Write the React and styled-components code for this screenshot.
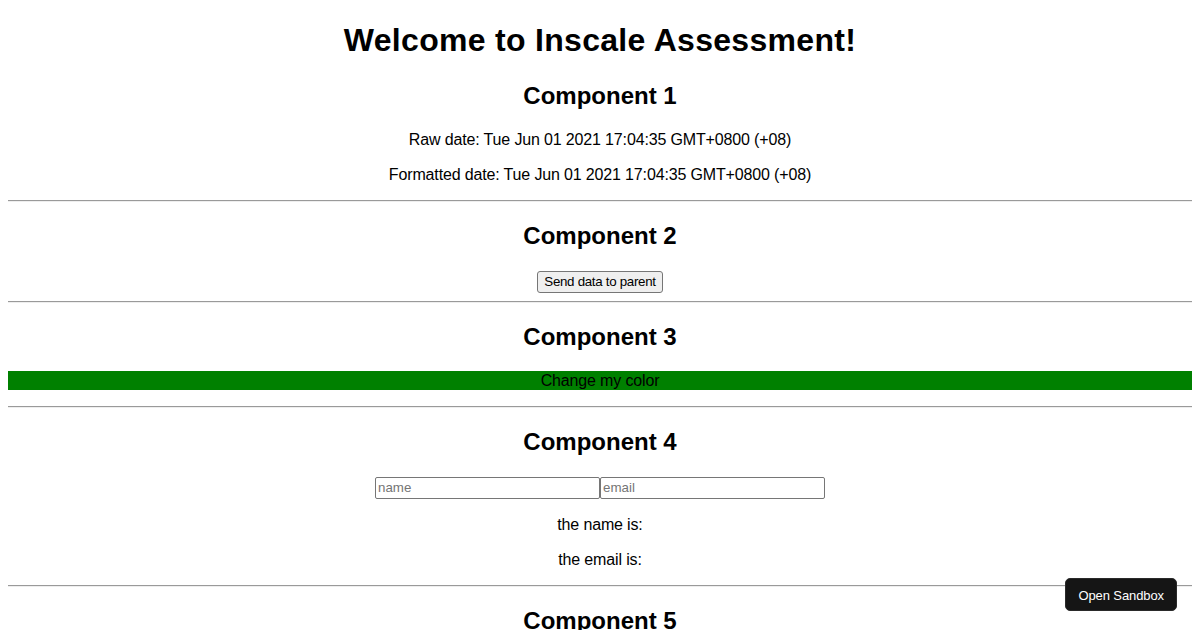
import React from "react";
import styled, { createGlobalStyle } from "styled-components";

const Global = createGlobalStyle`
  body {
    margin: 8px;
    font-family: "Liberation Sans", Arial, sans-serif;
    color: #000;
    background: #fff;
  }
`;

const Page = styled.div`
  text-align: center;
`;

const Title = styled.h1`
  font-size: 32px;
  line-height: 30px;
  font-weight: bold;
  letter-spacing: 0.3px;
  margin: 17px 0 27px;
`;

const Heading = styled.h2`
  font-size: 24px;
  font-weight: bold;
  margin: 19.92px 0;
`;

const Text = styled.p`
  font-size: 16px;
  line-height: 19px;
  letter-spacing: -0.15px;
  margin: 16px 0;
`;

const ColorBar = styled(Text)`
  background: ${(p) => p.$color};
`;

const Divider = styled.hr`
  margin: 8px 0;
  border: none;
  border-top: 1px solid #9a9a9a;
  border-bottom: 1px solid #eeeeee;
  height: 0;
`;

const ButtonRow = styled.div`
  padding-top: 1px;
  height: 22.6px;
`;

const Button = styled.button`
  font-family: "Liberation Sans", Arial, sans-serif;
  font-size: 13.33px;
  letter-spacing: -0.3px;
  padding: 1px 6px;
  background: #efefef;
  border: 1px solid #767676;
  border-radius: 3px;
  color: #000;
  height: 22px;
  vertical-align: top;
`;

const Input = styled.input`
  font-family: "Liberation Sans", Arial, sans-serif;
  font-size: 13.33px;
  width: 225px;
  height: 22px;
  box-sizing: border-box;
  padding: 1px 2px;
  border: 1px solid #767676;
  border-radius: 2px;
  vertical-align: top;
  &::placeholder {
    color: #757575;
  }
`;

const InputRow = styled.div`
  padding-top: 1px;
  font-size: 0;
`;

const SandboxButton = styled.a`
  position: fixed;
  right: 23px;
  bottom: 19px;
  background: #151515;
  color: #fff;
  font-family: "Liberation Sans", Arial, sans-serif;
  font-size: 13px;
  letter-spacing: -0.1px;
  padding: 0 12px;
  height: 33px;
  line-height: 33px;
  border-radius: 5px;
  text-decoration: none;
  border: 1px solid #2a2a2a;
  box-sizing: border-box;
`;

const date = "Tue Jun 01 2021 17:04:35 GMT+0800 (+08)";

export default function App() {
  return (
    <Page>
      <Global />
      <Title>Welcome to Inscale Assessment!</Title>

      <Heading>Component 1</Heading>
      <Text>Raw date: {date}</Text>
      <Text>Formatted date: {date}</Text>
      <Divider />

      <Heading>Component 2</Heading>
      <ButtonRow>
        <Button>Send data to parent</Button>
      </ButtonRow>
      <Divider />

      <Heading>Component 3</Heading>
      <ColorBar $color="green">Change my color</ColorBar>
      <Divider />

      <Heading>Component 4</Heading>
      <InputRow>
        <Input placeholder="name" />
        <Input placeholder="email" />
      </InputRow>
      <Text>the name is: </Text>
      <Text>the email is: </Text>
      <Divider />

      <Heading>Component 5</Heading>

      <SandboxButton href="#">Open Sandbox</SandboxButton>
    </Page>
  );
}
